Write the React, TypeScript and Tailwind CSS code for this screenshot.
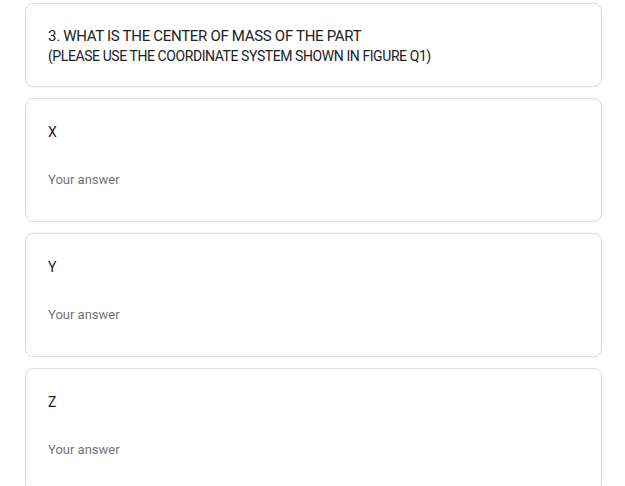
const Question = ({ label }: { label: string }) => (
  <div className="h-[124px] rounded-lg border border-[#dadce0] bg-white px-[22px] pt-[23px]">
    <div className="text-[14px] leading-5 text-[#202124]">{label}</div>
    <div className="mt-[28px] text-[13px] leading-5 text-[#70757a]">Your answer</div>
  </div>
);

export default function App() {
  return (
    <div
      className="min-h-screen bg-white pl-[25px] pr-[23px] pt-[3px]"
      style={{ fontFamily: "Roboto, 'Liberation Sans', sans-serif" }}
    >
      <div className="flex flex-col gap-[11px]">
        {/* Question header */}
        <div className="h-[84px] rounded-lg border border-[#dadce0] bg-white px-[22px] pt-[22px]">
          <div className="text-[15px] leading-5 tracking-[-0.3px] text-[#202124]">
            3. WHAT IS THE CENTER OF MASS OF THE PART
          </div>
          <div className="text-[14px] leading-5 tracking-[-0.42px] text-[#202124]">
            (PLEASE USE THE COORDINATE SYSTEM SHOWN IN FIGURE Q1)
          </div>
        </div>

        <Question label="X" />
        <Question label="Y" />
        <Question label="Z" />
      </div>
    </div>
  );
}
